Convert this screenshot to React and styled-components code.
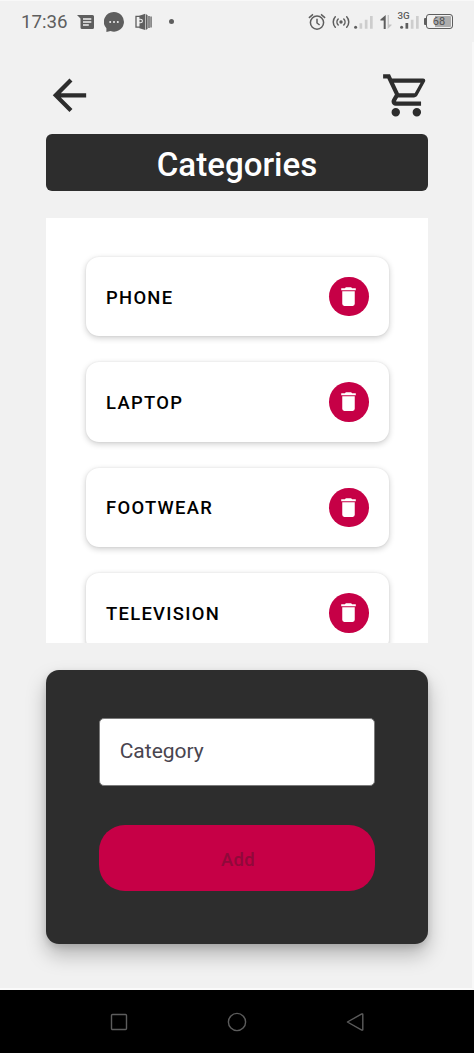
import React from 'react'
import styled, { createGlobalStyle } from 'styled-components'

const categories = ['Phone', 'Laptop', 'Footwear', 'Television']

function StatusBar() {
    return (
        <StatusContainer>
            <StatusSide>
                <Clock>17:36</Clock>
                <StatusIcon width="17" height="18" viewBox="0 0 17 18" $gap={9}>
                    <path fill="#5e5e5e" d="M0 2H15.5Q17 2 17 3.5V14.5Q17 16 15.5 16H5Q3.5 16 3.5 14.5V5.5Z" />
                    <path stroke="#f1f1f1" strokeWidth="1.3" d="M6 6H14.3M6 9H14.3M6 12H11.8" />
                </StatusIcon>
                <StatusIcon width="20" height="20" viewBox="0 0 20 20" $gap={10.5}>
                    <path fill="#5e5e5e" d="M10 0A10 9.8 0 1 1 6.5 19L2.4 19.9V16.3A10 9.8 0 0 1 10 0Z" />
                    <circle cx="6.2" cy="10" r="1" fill="#f1f1f1" />
                    <circle cx="10" cy="10" r="1" fill="#f1f1f1" />
                    <circle cx="13.8" cy="10" r="1" fill="#f1f1f1" />
                </StatusIcon>
                <StatusIcon width="17" height="18" viewBox="0 0 17 18" $gap={10.5}>
                    <path fill="#5e5e5e" d="M4.4 2.8L10.2 .8V17L4.4 15.2Z" />
                    <path fill="none" stroke="#5e5e5e" strokeWidth="1.3" d="M5.5 3.3H1V14.2H5" />
                    <path fill="none" stroke="#f1f1f1" strokeWidth="1.1" d="M3.6 13V6.2H5.4Q7.4 6.2 7.4 8Q7.4 9.8 5.4 9.8H4" />
                    <path fill="#5e5e5e" d="M10.8 1L12.6 2.2V15.7L10.8 17ZM13.3 3H14.7V15H13.3ZM15.4 3.6H16.7V14.4H15.4Z" />
                </StatusIcon>
                <Dot />
            </StatusSide>
            <StatusSide>
                <StatusIcon width="18" height="18" viewBox="0 0 18 18" $gap={0}>
                    <g fill="none" stroke="#5e5e5e" strokeWidth="1.5">
                        <circle cx="9" cy="9.6" r="6.6" />
                        <path d="M9 5.8V10L11.6 12M.9 4.8L5 1.4M17.1 4.8L13 1.4" />
                    </g>
                </StatusIcon>
                <StatusIcon width="18" height="14" viewBox="0 0 18 14" $gap={6}>
                    <g fill="none" stroke="#5e5e5e" strokeWidth="1.5" strokeLinecap="round">
                        <path d="M6.2 4A4.3 4.3 0 0 0 6.2 10M11.8 4A4.3 4.3 0 0 1 11.8 10M3.3 1.8A7.6 7.6 0 0 0 3.3 12.2M14.7 1.8A7.6 7.6 0 0 1 14.7 12.2" />
                    </g>
                    <circle cx="9" cy="7" r="1.7" fill="#5e5e5e" />
                </StatusIcon>
                <StatusIcon width="19" height="16" viewBox="0 0 19 16" $gap={4.5}>
                    <circle cx="1.6" cy="13.3" r="1.5" fill="#5e5e5e" />
                    <path fill="#cdcdcd" d="M5.5 9.3H8.2V14.7H5.5ZM10.8 5.7H13.5V14.7H10.8ZM16 2H18.7V14.7H16Z" />
                </StatusIcon>
                <StatusIcon width="12" height="18" viewBox="0 0 12 18" $gap={7}>
                    <path fill="#5e5e5e" d="M5.7 2V16H3.7V7.4H.4V6.4Z" />
                    <path fill="#c4c4c4" d="M7.6 2H8.9V11.5H11.6V12.3L7.6 16Z" />
                </StatusIcon>
                <Network>
                    <NetworkLabel>3G</NetworkLabel>
                    <StatusIcon width="19" height="16" viewBox="0 0 19 16" $gap={0}>
                        <circle cx="1.6" cy="13.3" r="1.5" fill="#5e5e5e" />
                        <path fill="#5e5e5e" d="M5.5 9H8.2V14.7H5.5Z" />
                        <path fill="#cdcdcd" d="M10.8 5.7H13.5V14.7H10.8ZM16 2H18.7V14.7H16Z" />
                    </StatusIcon>
                </Network>
                <Battery>
                    <BatteryBody>68</BatteryBody>
                </Battery>
            </StatusSide>
        </StatusContainer>
    )
}

function TrashIcon() {
    return (
        <svg width="25" height="25" viewBox="0 0 24 24" fill="#fff">
            <path d="M19,4H15.5L14.5,3H9.5L8.5,4H5V6H19M6,19A2,2 0 0,0 8,21H16A2,2 0 0,0 18,19V7H6V19Z" />
        </svg>
    )
}

function App() {
    return (
        <Container>
            <GlobalStyle />
            <StatusBar />
            <Screen>
                <Header>
                    <svg width="50.6" height="50.6" viewBox="0 0 24 24" fill="#2d2d2d">
                        <path d="M20,11V13H8L13.5,18.5L12.08,19.92L4.16,12L12.08,4.08L13.5,5.5L8,11H20Z" />
                    </svg>
                    <svg width="50.6" height="50.6" viewBox="0 0 24 24" fill="#2d2d2d">
                        <path d="M17,18A2,2 0 0,1 19,20A2,2 0 0,1 17,22C15.89,22 15,21.1 15,20C15,18.89 15.89,18 17,18M1,2H4.27L5.21,4H20A1,1 0 0,1 21,5C21,5.17 20.95,5.34 20.88,5.5L17.3,11.97C16.96,12.58 16.3,13 15.55,13H8.1L7.2,14.63L7.17,14.75A0.25,0.25 0 0,0 7.42,15H19V17H7C5.89,17 5,16.1 5,15C5,14.65 5.09,14.32 5.24,14.04L6.6,11.59L3,4H1V2M7,18A2,2 0 0,1 9,20A2,2 0 0,1 7,22C5.89,22 5,21.1 5,20C5,18.89 5.89,18 7,18M16,11L18.78,6H6.14L8.5,11H16Z" />
                    </svg>
                </Header>
                <Title>Categories</Title>
                <List>
                    {categories.map((name) => (
                        <Card key={name}>
                            <CardName>{name}</CardName>
                            <DeleteButton aria-label="Delete">
                                <TrashIcon />
                            </DeleteButton>
                        </Card>
                    ))}
                </List>
                <Form>
                    <Input placeholder="Category" />
                    <AddButton disabled>Add</AddButton>
                </Form>
            </Screen>
            <NavBar>
                <svg width="20" height="20" viewBox="0 0 20 20">
                    <rect x="2.5" y="2.5" width="15" height="15" rx="1" />
                </svg>
                <svg width="20" height="20" viewBox="0 0 20 20">
                    <circle cx="10" cy="10" r="8.6" />
                </svg>
                <svg width="20" height="20" viewBox="0 0 20 20">
                    <path strokeLinejoin="round" d="M2.4 10L16.8 1.9Q17.8 1.6 17.8 2.6V17.4Q17.8 18.4 16.8 18.1Z" />
                </svg>
            </NavBar>
        </Container>
    )
}

export default App

const GlobalStyle = createGlobalStyle`
* {
    box-sizing: border-box;
}
body {
    margin: 0;
    background: #f1f1f1;
    font-family: Roboto, sans-serif;
}
svg {
    display: block;
    flex-shrink: 0;
}
`;

const Container = styled.div`
width: 474px;
height: 1053px;
display: flex;
flex-direction: column;
overflow: hidden;
background: #f1f1f1;
`;

const StatusContainer = styled.div`
height: 42px;
flex-shrink: 0;
display: flex;
justify-content: space-between;
padding: 0 21.5px 0 21px;
border-top: 1px solid #f8f8f8;
`;

const StatusSide = styled.div`
display: flex;
align-items: center;
`;

const StatusIcon = styled.svg`
margin-left: ${({ $gap }) => $gap}px;
`;

const Clock = styled.span`
font-size: 18.7px;
color: #5e5e5e;
line-height: 22px;
padding-top: 1px;
`;

const Dot = styled.div`
width: 5px;
height: 5px;
margin-left: 17px;
border-radius: 50%;
background: #5e5e5e;
`;

const Network = styled.div`
position: relative;
margin-left: 8px;
`;

const NetworkLabel = styled.span`
position: absolute;
left: -2.5px;
top: -2.8px;
font-size: 9.8px;
font-weight: 500;
line-height: 9px;
color: #5e5e5e;
`;

const Battery = styled.div`
display: flex;
align-items: center;
margin-left: 4.5px;

&::before {
    content: '';
    width: 2px;
    height: 7px;
    background: #5e5e5e;
    border-radius: 1px 0 0 1px;
}
`;

const BatteryBody = styled.div`
width: 27px;
height: 15px;
border: 1px solid #5e5e5e;
border-radius: 3px;
box-shadow: inset 0 0 0 1px #f1f1f1;
background: linear-gradient(90deg, #f1f1f1 32%, #adadad 32%);
color: #505050;
font-size: 11px;
line-height: 14px;
text-align: center;
`;

const Screen = styled.div`
flex: 1;
display: flex;
flex-direction: column;
padding: 27.5px 44px 0 46px;
border-right: 2px solid #f8f8f8;
border-bottom: 2px solid #fafafa;
`;

const Header = styled.div`
display: flex;
justify-content: space-between;
flex-shrink: 0;
height: 64.8px;
margin: 0 -3.4px 0 -2.2px;
`;

const Title = styled.div`
height: 57.2px;
flex-shrink: 0;
border-radius: 6px;
background: #2d2d2d;
color: #fff;
font-size: 33.1px;
font-weight: 500;
line-height: 61px;
text-align: center;
`;

const List = styled.div`
display: flex;
flex-direction: column;
gap: 26.2px;
height: 425.5px;
flex-shrink: 0;
margin-top: 26.5px;
padding: 39px 39.5px 0;
background: #fff;
overflow: hidden;
`;

const Card = styled.div`
display: flex;
flex-shrink: 0;
align-items: center;
justify-content: space-between;
height: 79.2px;
padding: 0 20px 0 20.5px;
border-radius: 13px;
background: #fff;
box-shadow: 0 2px 6px rgba(0, 0, 0, 0.2), 0 0 2px rgba(0, 0, 0, 0.08);
`;

const CardName = styled.span`
font-size: 18.4px;
font-weight: 500;
letter-spacing: 1.3px;
text-transform: uppercase;
padding-top: 1px;
color: #000;
`;

const DeleteButton = styled.button`
display: flex;
align-items: center;
justify-content: center;
width: 39.6px;
height: 39.6px;
padding: 0;
border: none;
border-radius: 50%;
background: #c60046;
`;

const Form = styled.div`
display: flex;
flex-direction: column;
flex-shrink: 0;
gap: 39.3px;
height: 274px;
margin-top: 26.5px;
padding: 47.7px 52.7px 0;
border-radius: 13px;
background: #2d2d2d;
box-shadow: 0 11px 20px rgba(0, 0, 0, 0.25), 0 3px 7px rgba(0, 0, 0, 0.12);
`;

const Input = styled.input`
height: 68px;
padding: 0 20px 1px;
border: 1px solid #7b7b7b;
border-radius: 5px;
background: #fff;
font-family: inherit;
font-size: 21px;
outline: none;

&::placeholder {
    color: #49454f;
    opacity: 1;
}
`;

const AddButton = styled.button`
height: 66px;
border: none;
border-radius: 26px;
background: #c60046;
color: #90093a;
font-family: inherit;
font-size: 18.4px;
font-weight: 500;
letter-spacing: 0.3px;
padding: 3px 0 0 2px;
`;

const NavBar = styled.div`
height: 63px;
flex-shrink: 0;
display: flex;
align-items: center;
justify-content: space-between;
padding: 0 109px 0 108.5px;
background: #000;

svg {
    fill: none;
    stroke: #5c5c5c;
    stroke-width: 1.4;
}
`;
